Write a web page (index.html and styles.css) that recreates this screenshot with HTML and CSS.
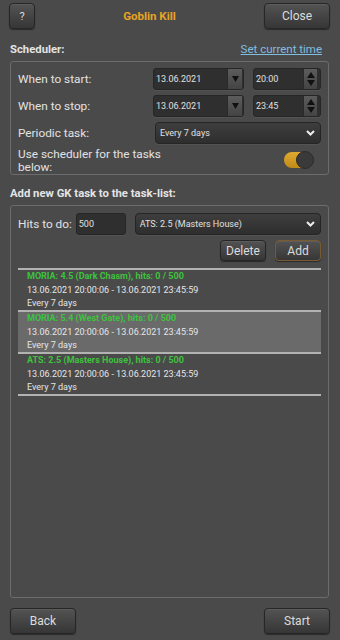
FILE: index.html
```html
<!DOCTYPE html>
<html>
<head>
<meta charset="utf-8">
<link rel="stylesheet" href="styles.css">
</head>
<body>
<div class="app">
  <div class="topbar">
    <button class="btn btn-q">?</button>
    <div class="title">Goblin Kill</div>
    <button class="btn btn-wide">Close</button>
  </div>

  <div class="section-head head-first">
    <span class="section-title">Scheduler:</span>
    <span class="link">Set current time</span>
  </div>

  <div class="box sched">
    <div class="row">
      <span class="label">When to start:</span>
      <div class="field date"><span class="val">13.06.2021</span><span class="drop"><svg width="7" height="6" viewBox="0 0 7 6"><path d="M0 0H7L3.5 6Z" fill="#111"/></svg></span></div>
      <div class="field time"><span class="val">20:00</span><span class="spin"><svg width="8" height="14" viewBox="0 0 8 14"><path d="M4 0L8 6H0Z M0 8H8L4 14Z" fill="#111"/></svg></span></div>
    </div>
    <div class="row">
      <span class="label">When to stop:</span>
      <div class="field date"><span class="val">13.06.2021</span><span class="drop"><svg width="7" height="6" viewBox="0 0 7 6"><path d="M0 0H7L3.5 6Z" fill="#111"/></svg></span></div>
      <div class="field time"><span class="val">23:45</span><span class="spin"><svg width="8" height="14" viewBox="0 0 8 14"><path d="M4 0L8 6H0Z M0 8H8L4 14Z" fill="#111"/></svg></span></div>
    </div>
    <div class="row">
      <span class="label">Periodic task:</span>
      <div class="select periodic"><span class="val">Every 7 days</span><svg class="chev" width="9" height="6" viewBox="0 0 9 6"><path d="M1 1L4.5 4.5L8 1" stroke="#eee" stroke-width="2" fill="none"/></svg></div>
    </div>
    <div class="row row-toggle">
      <span class="label label-wrap">Use scheduler for the tasks below:</span>
      <div class="toggle"><span class="knob"></span></div>
    </div>
  </div>

  <div class="section-head">
    <span class="section-title">Add new GK task to the task-list:</span>
  </div>

  <div class="box tasks">
    <div class="row">
      <span class="label">Hits to do:</span>
      <div class="field hits"><span class="val">500</span></div>
      <div class="select location"><span class="val">ATS: 2.5 (Masters House)</span><svg class="chev" width="9" height="6" viewBox="0 0 9 6"><path d="M1 1L4.5 4.5L8 1" stroke="#eee" stroke-width="2" fill="none"/></svg></div>
    </div>
    <div class="actions">
      <button class="btn btn-small">Delete</button>
      <button class="btn btn-small btn-add">Add</button>
    </div>
    <div class="list">
      <div class="item">
        <div class="item-title">MORIA: 4.5 (Dark Chasm), hits: 0 / 500</div>
        <div class="item-line">13.06.2021 20:00:06 - 13.06.2021 23:45:59</div>
        <div class="item-line">Every 7 days</div>
      </div>
      <div class="item selected">
        <div class="item-title">MORIA: 5.4 (West Gate), hits: 0 / 500</div>
        <div class="item-line">13.06.2021 20:00:06 - 13.06.2021 23:45:59</div>
        <div class="item-line">Every 7 days</div>
      </div>
      <div class="item">
        <div class="item-title">ATS: 2.5 (Masters House), hits: 0 / 500</div>
        <div class="item-line">13.06.2021 20:00:06 - 13.06.2021 23:45:59</div>
        <div class="item-line">Every 7 days</div>
      </div>
    </div>
  </div>

  <div class="bottombar">
    <button class="btn btn-wide btn-back">Back</button>
    <button class="btn btn-wide">Start</button>
  </div>
</div>
</body>
</html>
```

FILE: styles.css
```css
* { box-sizing: border-box; }
html, body {
  margin: 0;
  padding: 0;
  width: 340px;
  height: 640px;
  background: #4a4a4a;
  font-family: Roboto, "Liberation Sans", sans-serif;
  color: #dedede;
  overflow: hidden;
}
.app {
  height: 640px;
  display: flex;
  flex-direction: column;
  padding: 3px 11px 6px 10px;
}
.btn {
  font-family: Roboto, "Liberation Sans", sans-serif;
  color: #dcdcdc;
  background: linear-gradient(#535353, #363636);
  border: 1px solid #262626;
  border-radius: 4px;
  box-shadow: 0 1px 1px rgba(0,0,0,0.45), inset 0 1px 0 rgba(255,255,255,0.06);
  padding: 0;
  font-size: 12px;
  cursor: pointer;
}
.topbar {
  display: flex;
  align-items: center;
  justify-content: space-between;
  height: 26px;
}
.btn-q {
  width: 26px;
  height: 26px;
  margin-left: -1px;
  font-size: 11px;
}
.btn-wide {
  width: 66px;
  height: 26px;
  margin-right: -1px;
}
.title {
  color: #e8a423;
  font-weight: bold;
  font-size: 11.5px;
}
.section-head {
  display: flex;
  align-items: center;
  justify-content: space-between;
  height: 20px;
  margin-top: 8px;
  margin-bottom: 2px;
}
.head-first { margin-top: 10px; }
.section-title {
  font-weight: bold;
  font-size: 11.3px;
  color: #e4e4e4;
}
.link {
  color: #80bde0;
  text-decoration: underline;
  font-size: 11.5px;
  margin-right: 7px;
}
.box {
  border: 1px solid #6c6c6c;
  border-radius: 3px;
  padding: 6px 7px 0 7px;
}
.row {
  display: flex;
  align-items: center;
  height: 22px;
  margin-bottom: 5px;
}
.label {
  font-size: 11.8px;
  color: #e2e2e2;
  width: 135px;
  flex: none;
}
.field {
  display: flex;
  align-items: center;
  height: 22px;
  background: #2f2f2f;
  border: 1px solid #262626;
  border-radius: 3px;
  box-shadow: 0 1px 0 rgba(255,255,255,0.05);
  font-size: 9px;
  color: #e0e0e0;
}
.val {
  padding-left: 2px;
  flex: 1;
  white-space: nowrap;
}
.date { width: 91px; }
.time { width: 68px; margin-left: 9px; }
.drop, .spin {
  width: 15px;
  height: 20px;
  display: flex;
  align-items: center;
  justify-content: center;
  background: linear-gradient(#5c5c5c, #444);
  border-left: 1px solid #2a2a2a;
  margin-right: 1px;
}
.spin { width: 14px; margin-right: 3px; }
.select {
  display: flex;
  align-items: center;
  height: 22px;
  background: linear-gradient(#3e3e3e, #2e2e2e);
  border: 1px solid #252525;
  border-radius: 4px;
  box-shadow: 0 1px 0 rgba(255,255,255,0.05);
  font-size: 9px;
  color: #e0e0e0;
  padding-right: 5px;
}
.select .val { padding-left: 4px; }
.periodic { width: 166px; margin-left: 2px; }
.row-toggle {
  height: 25px;
  margin-bottom: 0;
  align-items: flex-start;
}
.label-wrap {
  width: 160px;
  line-height: 13px;
  margin-top: -1px;
}
.toggle {
  margin-left: auto;
  margin-right: 8px;
  margin-top: 3px;
  width: 29px;
  height: 16px;
  border-radius: 8px;
  background: linear-gradient(#e0aa30, #c08a18);
  position: relative;
}
.knob {
  position: absolute;
  right: -1px;
  top: -1px;
  width: 18px;
  height: 18px;
  border-radius: 50%;
  background: #3a3a3a;
  border: 1px solid #2a2a2a;
}
.tasks {
  flex: 1;
  padding-top: 7px;
  margin-bottom: 10px;
}
.hits { width: 50px; margin-left: 4px; }
.tasks .label { width: auto; }
.location { width: 187px; margin-left: 9px; }
.actions {
  display: flex;
  justify-content: flex-end;
  gap: 9px;
  height: 21px;
}
.btn-small {
  width: 46px;
  height: 21px;
  font-size: 12px;
}
.btn-add { border-color: #7a5a30; }
.list {
  margin-top: 7px;
  border-top: 2px solid #b2b2b2;
}
.item {
  padding: 0 9px;
  height: 42px;
  border-bottom: 2px solid #b2b2b2;
  font-size: 9px;
  line-height: 13.5px;
}
.item.selected { background: #6a6a6a; }
.item-title {
  color: #3ec23e;
  font-weight: bold;
}
.item-line { color: #e6e6e6; }
.bottombar {
  display: flex;
  justify-content: space-between;
  align-items: center;
  height: 26px;
}
.btn-back { margin-right: 0; }
```
